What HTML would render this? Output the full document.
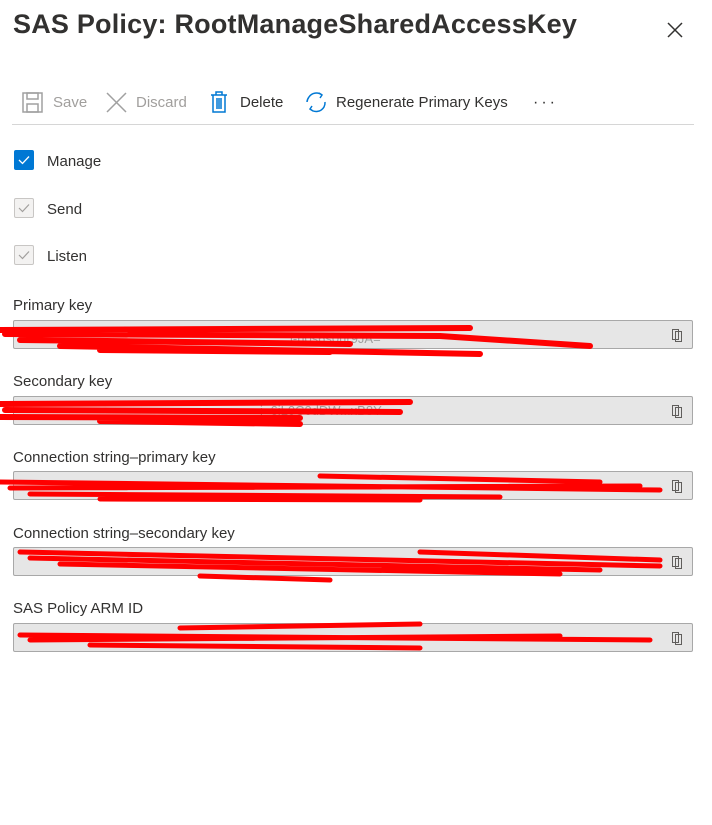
<!DOCTYPE html>
<html><head><meta charset="utf-8"><style>
body{margin:0;width:712px;height:825px;background:#fff;font-family:"Segoe UI","Liberation Sans",sans-serif;color:#323130;position:relative;overflow:hidden}
.a{position:absolute}
h1{position:absolute;left:13px;top:9px;margin:0;font-size:27px;font-weight:600;color:#323130;letter-spacing:0.2px}
.tb{font-size:15px;top:94px}
.cb{width:20px;height:20px;border-radius:2px;box-sizing:border-box}
.lbl{font-size:15px;left:13px}
.box{left:13px;width:680px;height:29px;background:#e6e6e6;border:1px solid #a8a8a8;border-radius:2px;box-sizing:border-box}
</style></head><body>
<h1>SAS Policy: RootManageSharedAccessKey</h1>
<svg class="a" style="left:666px;top:21px" width="18" height="18"><path d="M2 2L16 16M16 2L2 16" stroke="#323130" stroke-width="1.5"/></svg>

<svg class="a" style="left:22px;top:92px" width="21" height="21"><rect x="1" y="1" width="19" height="19" fill="none" stroke="#a0a0a0" stroke-width="1.5"/><rect x="5" y="1" width="11" height="6" fill="none" stroke="#a0a0a0" stroke-width="1.5"/><rect x="5" y="12" width="11" height="8" fill="none" stroke="#a0a0a0" stroke-width="1.5"/></svg>
<div class="a tb" style="left:53px;color:#a19f9d">Save</div>
<svg class="a" style="left:106px;top:92px" width="21" height="21"><path d="M1 1L20 20M20 1L1 20" stroke="#a0a0a0" stroke-width="1.5"/></svg>
<div class="a tb" style="left:136px;color:#a19f9d">Discard</div>
<svg class="a" style="left:210px;top:91px" width="18" height="22"><path d="M1 4H17M6 4V1H12V4M3 4V21H15V4M7 7V18M9 7V18M11 7V18" stroke="#0078d4" stroke-width="1.5" fill="none"/></svg>
<div class="a tb" style="left:240px">Delete</div>
<svg class="a" style="left:305px;top:91px" width="22" height="22"><path d="M4 6A9 9 0 0 1 17 4M19 16A9 9 0 0 1 5 18M2 11A9 9 0 0 1 4 6M20 11A9 9 0 0 1 19 16M14 2L17 4L15 7M8 20L5 18L7 15" stroke="#0078d4" stroke-width="1.5" fill="none"/></svg>
<div class="a tb" style="left:336px">Regenerate Primary Keys</div>
<div class="a" style="left:533px;top:94px;font-size:16px;letter-spacing:3px">···</div>
<div class="a" style="left:12px;top:124px;width:682px;height:1px;background:#d6d6d6"></div>

<div class="a cb" style="left:14px;top:150px;background:#0078d4"><svg width="20" height="20"><path d="M5 10L8.5 13.5L15 6.5" stroke="#fff" stroke-width="1.3" fill="none"/></svg></div>
<div class="a lbl" style="left:47px;top:153px">Manage</div>
<div class="a cb" style="left:14px;top:198px;background:#f3f2f1;border:1px solid #c8c6c4"><svg width="18" height="18"><path d="M4 9L7.5 12.5L14 5.5" stroke="#a19f9d" stroke-width="1.2" fill="none"/></svg></div>
<div class="a lbl" style="left:47px;top:201px">Send</div>
<div class="a cb" style="left:14px;top:245px;background:#f3f2f1;border:1px solid #c8c6c4"><svg width="18" height="18"><path d="M4 9L7.5 12.5L14 5.5" stroke="#a19f9d" stroke-width="1.2" fill="none"/></svg></div>
<div class="a lbl" style="left:47px;top:248px">Listen</div>

<div class="a lbl" style="top:297px">Primary key</div>
<div class="a box" style="top:320px"></div>
<div class="a lbl" style="top:373px">Secondary key</div>
<div class="a box" style="top:396px"></div>
<div class="a lbl" style="top:449px">Connection string–primary key</div>
<div class="a box" style="top:471px"></div>
<div class="a lbl" style="top:525px">Connection string–secondary key</div>
<div class="a box" style="top:547px"></div>
<div class="a lbl" style="top:600px">SAS Policy ARM ID</div>
<div class="a box" style="top:623px"></div>

<svg class="a" style="left:0;top:0" width="712" height="825">
<g fill="#a0a0a0"><text x="290" y="343" font-size="13" font-family="Liberation Sans">i-h0s6s0ur9JA=</text><text x="260" y="415" font-size="13" font-family="Liberation Sans">i=6iL0C0dDW...xB8Y=</text></g>
<g stroke="#ff0000" fill="none" stroke-linecap="round">
<path d="M0 330L470 328M5 334L440 336L590 346M20 340L350 344M60 346L480 354M100 350L330 352" stroke-width="6"/>
<path d="M0 404L410 402M5 410L400 412M0 417L300 418M100 421L300 424" stroke-width="6"/>
<path d="M0 482L660 490M10 488L640 486M30 494L500 497M320 476L600 482M100 499L420 500" stroke-width="5"/>
<path d="M20 552L660 566M30 558L600 570M60 564L560 574M200 576L330 580M420 552L660 560" stroke-width="5"/>
<path d="M20 635L650 640M30 640L560 636M90 645L420 648M180 628L420 624" stroke-width="5"/>
</g>
<g stroke="#605e5c" fill="none" stroke-width="1">
<path d="M672.5 329.5h6v10h-6zM675.5 331.5h6v10h-6z"/>
<path d="M672.5 405.5h6v10h-6zM675.5 407.5h6v10h-6z"/>
<path d="M672.5 480.5h6v10h-6zM675.5 482.5h6v10h-6z"/>
<path d="M672.5 556.5h6v10h-6zM675.5 558.5h6v10h-6z"/>
<path d="M672.5 632.5h6v10h-6zM675.5 634.5h6v10h-6z"/>
</g>
</svg>
</body></html>
